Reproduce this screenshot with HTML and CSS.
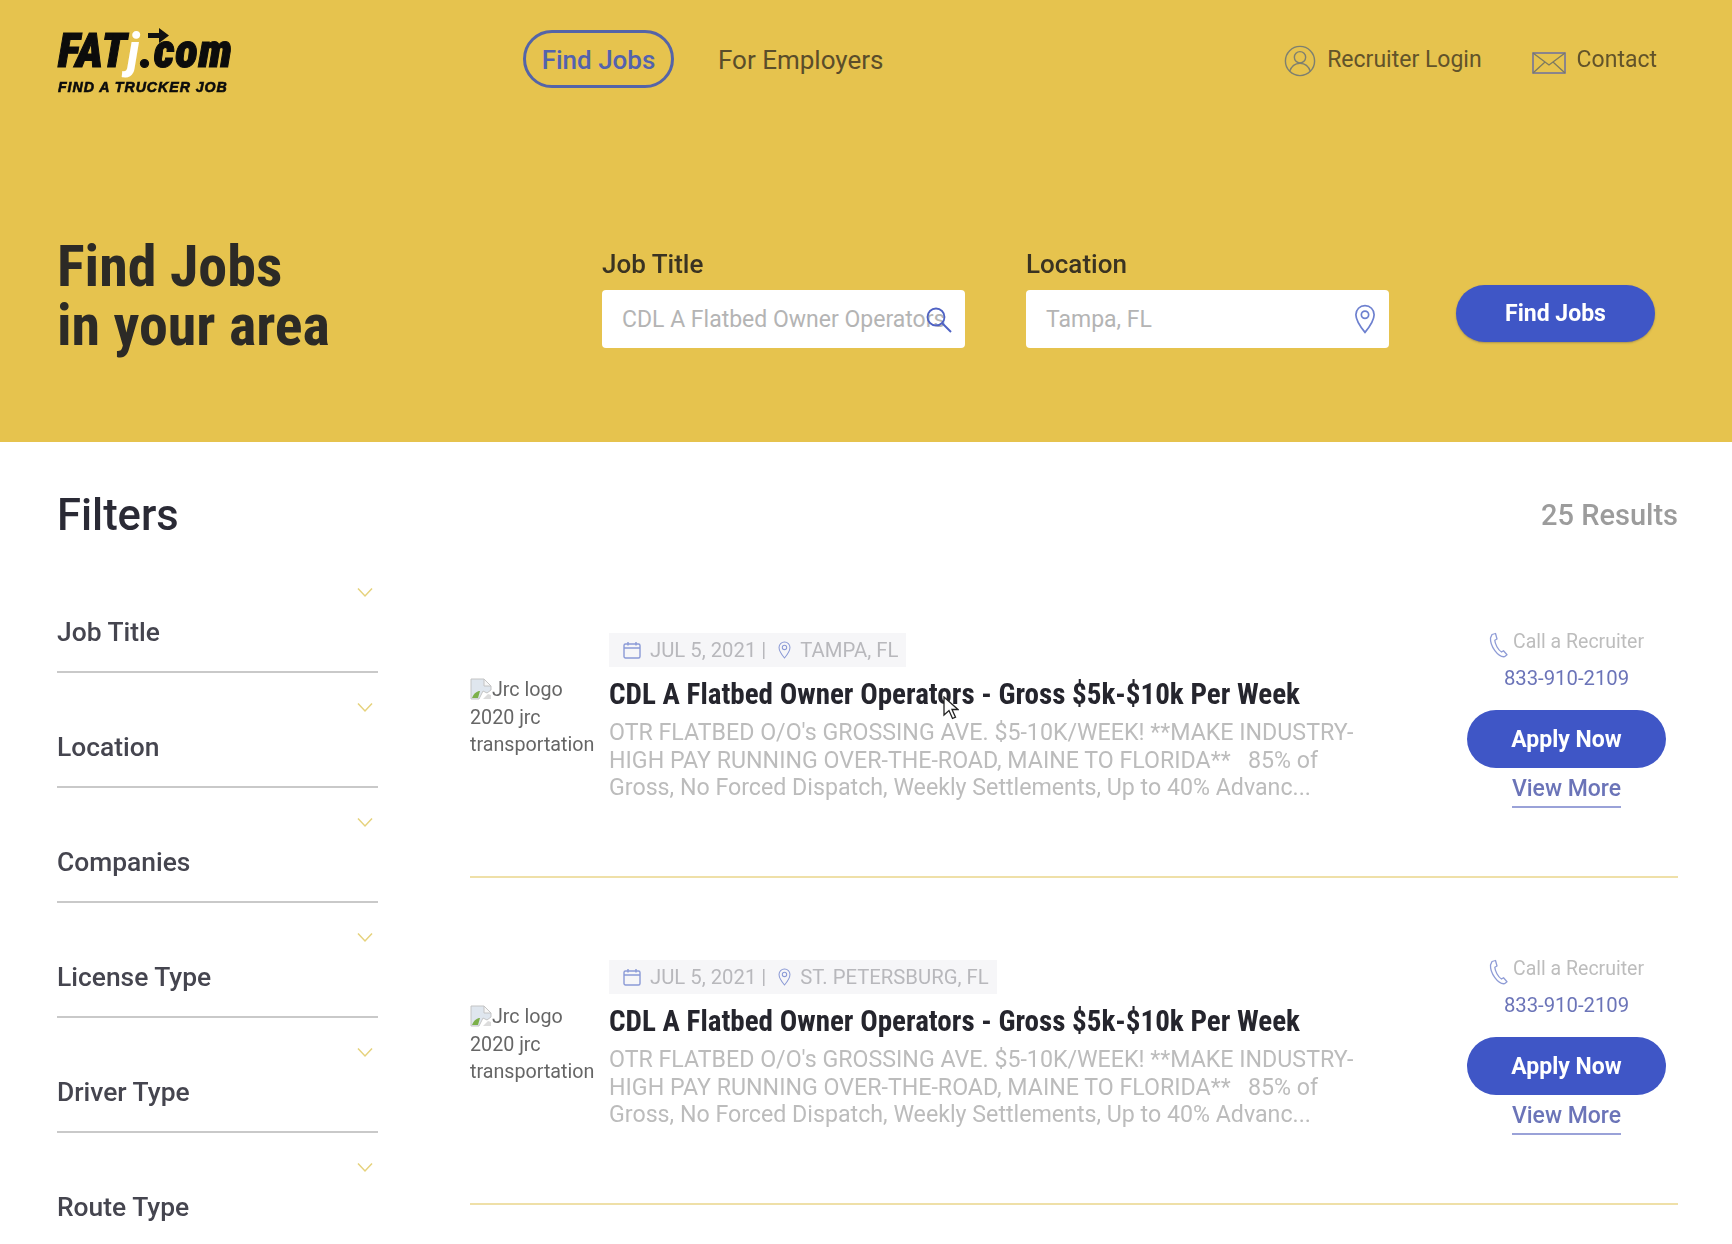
FILE: index.html
```html
<!DOCTYPE html>
<html lang="en">
<head>
<meta charset="utf-8">
<title>FATj.com - Find Jobs</title>
<link rel="stylesheet" href="styles.css">
</head>
<body>
<svg class="defs" width="0" height="0" aria-hidden="true">
  <defs>
    <symbol id="pin" viewBox="0 0 20 28"><path d="M10 1.500C5.200 1.500 1.500 5.200 1.500 10c0 6 8.500 16.500 8.500 16.500S18.500 16 18.500 10c0-4.800-3.700-8.500-8.500-8.500z" fill="none" stroke="currentColor" stroke-width="1.600"/><circle cx="10" cy="10" r="3.400" fill="none" stroke="currentColor" stroke-width="1.600"/></symbol>
    <symbol id="cal" viewBox="0 0 18 18"><rect x="1" y="3" width="16" height="14" rx="1.500" fill="none" stroke="currentColor" stroke-width="1.400"/><path d="M1 7h16M5 1v3.500M13 1v3.500" fill="none" stroke="currentColor" stroke-width="1.400"/></symbol>
    <symbol id="phone" viewBox="0 0 20 26"><path d="M3 2.500 6.500 1.500 8 7 5.800 8.300C6 12 9 18 12.500 20l2-1.300 3.500 4-2.500 2C9 25.500 1 14 1.500 6z" fill="none" stroke="currentColor" stroke-width="1.300" stroke-linejoin="round"/></symbol>
    <symbol id="chev" viewBox="0 0 16 10"><path d="M1 1l7 7.500L15 1" fill="none" stroke="currentColor" stroke-width="1.500"/></symbol>
    <symbol id="broken" viewBox="0 0 22 22"><path d="M1 1h13l7 7v4l-4 3-4-2-4 8H1z" fill="#dfe6ee" stroke="#c4c4c4"/><path d="M14 1v7h7z" fill="#f7f7f7" stroke="#c4c4c4"/><path d="M2 20c2-5 5-7 8-7l-2 7z" fill="#7cb04a"/><path d="M13 21l5-5 3 1v4z" fill="#dcdcdc"/></symbol>
  </defs>
</svg>

<header class="hero">
  <div class="topbar">
    <a class="logo">
      <span class="logo-main">FAT<span class="logo-j">j</span>.com</span>
      <svg class="logo-arrow" viewBox="0 0 21 15"><path d="M0 5h11V0l10 7.500L11 15v-5H0z" fill="#111"/></svg>
      <span class="logo-sub">FIND A TRUCKER JOB</span>
    </a>
    <nav class="nav">
      <a class="nav-pill">Find Jobs</a>
      <a class="nav-link">For Employers</a>
    </nav>
    <div class="account">
      <a class="acct-link">
        <svg class="acct-icon" viewBox="0 0 34 34"><circle cx="17" cy="17" r="15.500" fill="none" stroke="#7d7f70" stroke-width="1.500"/><circle cx="17" cy="13" r="6" fill="none" stroke="#7d7f70" stroke-width="1.500"/><path d="M6 28c2-6 6-8.500 11-8.500S26 22 28 28" fill="none" stroke="#7d7f70" stroke-width="1.500"/></svg>
        <span>Recruiter Login</span>
      </a>
      <a class="acct-link">
        <svg class="acct-icon mail" viewBox="0 0 34 22"><rect x="1" y="1" width="32" height="20" fill="none" stroke="#6c70a0" stroke-width="1.500"/><path d="M1 1l16 12L33 1M1 21l12-11M33 21 21 10" fill="none" stroke="#7d7a60" stroke-width="1.300"/></svg>
        <span>Contact</span>
      </a>
    </div>
  </div>
  <div class="search-row">
    <h1 class="hero-title">Find Jobs<br>in your area</h1>
    <div class="field">
      <label class="field-label">Job Title</label>
      <div class="field-box">
        <span class="field-text">CDL A Flatbed Owner Operators</span>
        <svg class="field-icon" viewBox="0 0 28 28"><circle cx="11" cy="11" r="8.500" fill="none" stroke="#4f62c4" stroke-width="1.800"/><path d="M17 17l9 9" stroke="#4f62c4" stroke-width="2"/></svg>
      </div>
    </div>
    <div class="field">
      <label class="field-label">Location</label>
      <div class="field-box">
        <span class="field-text">Tampa, FL</span>
        <svg class="field-icon pin"><use href="#pin"/></svg>
      </div>
    </div>
    <a class="btn btn-search">Find Jobs</a>
  </div>
</header>

<main class="content">
  <div class="content-head">
    <h2 class="filters-title">Filters</h2>
    <span class="results">25 Results</span>
  </div>
  <div class="columns">
    <aside class="sidebar">
      <div class="filter"><svg class="chev"><use href="#chev"/></svg><span>Job Title</span></div>
      <div class="filter"><svg class="chev"><use href="#chev"/></svg><span>Location</span></div>
      <div class="filter"><svg class="chev"><use href="#chev"/></svg><span>Companies</span></div>
      <div class="filter"><svg class="chev"><use href="#chev"/></svg><span>License Type</span></div>
      <div class="filter"><svg class="chev"><use href="#chev"/></svg><span>Driver Type</span></div>
      <div class="filter"><svg class="chev"><use href="#chev"/></svg><span>Route Type</span></div>
    </aside>
    <section class="jobs">
      <article class="job">
        <div class="job-logo"><svg class="broken"><use href="#broken"/></svg>Jrc logo 2020 jrc transportation</div>
        <div class="job-body">
          <div class="tag"><svg class="tag-cal"><use href="#cal"/></svg><span>JUL 5, 2021 |</span><svg class="tag-pin"><use href="#pin"/></svg><span>TAMPA, FL</span></div>
          <h3 class="job-title">CDL A Flatbed Owner Operators - Gross $5k-$10k Per Week</h3>
          <p class="job-desc">OTR FLATBED O/O's GROSSING AVE. $5-10K/WEEK! **MAKE INDUSTRY-<br>HIGH PAY RUNNING OVER-THE-ROAD, MAINE TO FLORIDA**&nbsp;&nbsp; 85% of<br>Gross, No Forced Dispatch, Weekly Settlements, Up to 40% Advanc...</p>
        </div>
        <div class="job-actions">
          <div class="call"><svg class="call-icon"><use href="#phone"/></svg><span>Call a Recruiter</span></div>
          <a class="phone-num">833-910-2109</a>
          <a class="btn btn-apply">Apply Now</a>
          <a class="view-more">View More</a>
        </div>
      </article>
      <article class="job">
        <div class="job-logo"><svg class="broken"><use href="#broken"/></svg>Jrc logo 2020 jrc transportation</div>
        <div class="job-body">
          <div class="tag"><svg class="tag-cal"><use href="#cal"/></svg><span>JUL 5, 2021 |</span><svg class="tag-pin"><use href="#pin"/></svg><span>ST. PETERSBURG, FL</span></div>
          <h3 class="job-title">CDL A Flatbed Owner Operators - Gross $5k-$10k Per Week</h3>
          <p class="job-desc">OTR FLATBED O/O's GROSSING AVE. $5-10K/WEEK! **MAKE INDUSTRY-<br>HIGH PAY RUNNING OVER-THE-ROAD, MAINE TO FLORIDA**&nbsp;&nbsp; 85% of<br>Gross, No Forced Dispatch, Weekly Settlements, Up to 40% Advanc...</p>
        </div>
        <div class="job-actions">
          <div class="call"><svg class="call-icon"><use href="#phone"/></svg><span>Call a Recruiter</span></div>
          <a class="phone-num">833-910-2109</a>
          <a class="btn btn-apply">Apply Now</a>
          <a class="view-more">View More</a>
        </div>
      </article>
    </section>
  </div>
</main>
<svg class="cursor" viewBox="0 0 16 24"><path d="M1 1v18l5-4.500 3.500 8 3-1.300-3.500-7.700H15z" fill="#fff" stroke="#222" stroke-width="1.300"/></svg>
</body>
</html>
```

FILE: styles.css
```css
* { box-sizing: border-box; }
html, body { margin: 0; padding: 0; }
body {
  position: relative;
  width: 1732px;
  height: 1244px;
  overflow: hidden;
  background: #fff;
  font-family: Roboto, "Liberation Sans", sans-serif;
  color: #2b2b33;
  filter: blur(.45px);
}
.defs { position: absolute; }
a { color: inherit; text-decoration: none; }

.hero {
  height: 442px;
  background: #e6c34e;
  padding: 30px 0 0 57px;
}
.topbar { display: flex; align-items: center; height: 58px; }
.logo {
  position: relative;
  display: block;
  width: 175px;
  height: 66px;
  margin-right: 291px;
  color: #0c0c0c;
  font-style: italic;
}
.logo-main {
  display: block;
  padding-left: 1px;
  font-family: "Roboto Condensed", "Liberation Sans Narrow", sans-serif;
  font-weight: 900;
  font-size: 47px;
  line-height: 50px;
  letter-spacing: .6px;
  white-space: nowrap;
  -webkit-text-stroke: 1px #0c0c0c;
}
.logo-j { color: #fff; -webkit-text-stroke: 0; }
.logo-arrow { position: absolute; left: 91px; top: 2px; width: 21px; height: 15px; }
.logo-sub {
  display: block;
  margin-top: 3px;
  padding-left: 1px;
  font-family: "Liberation Sans", sans-serif;
  font-weight: 700;
  font-size: 14.200px;
  line-height: 16px;
  letter-spacing: .95px;
  -webkit-text-stroke: .6px #0c0c0c;
  white-space: nowrap;
}
.nav { display: flex; align-items: center; gap: 44px; }
.nav-pill {
  display: flex;
  align-items: center;
  justify-content: center;
  width: 151px;
  height: 58px;
  padding-top: 2px;
  border: 3px solid #5464a8;
  border-radius: 29px;
  color: #5362ae;
  font-size: 26px;
  font-weight: 500;
}
.nav-link { margin-top: 2px; font-size: 26px; color: #5a4d2a; }
.account { display: flex; align-items: center; margin-left: auto; margin-right: 75px; gap: 50px; }
.acct-link { display: flex; align-items: center; gap: 11px; font-size: 23px; color: #62532a; }
.acct-icon { width: 32px; height: 32px; margin-top: 4px; }
.acct-icon.mail { width: 34px; height: 22px; margin-top: 8px; }

.search-row { display: flex; align-items: flex-start; margin-top: 149px; }
.hero-title {
  width: 545px;
  margin: 0;
  font-size: 58px;
  line-height: 59px;
  font-weight: 700;
  color: #2c2a26;
  white-space: nowrap;
  font-family: "Roboto Condensed", "Liberation Sans Narrow", Roboto, sans-serif;
}
.field { width: 363px; margin-right: 61px; padding-top: 12px; }
.field-label { display: block; font-size: 26px; line-height: 30px; font-weight: 500; color: #3a3322; margin-bottom: 11px; }
.field-box {
  display: flex;
  align-items: center;
  position: relative;
  height: 58px;
  padding-left: 20px;
  background: #fff;
  border-radius: 4px;
}
.field-text { font-size: 23px; color: #b4b4b4; white-space: nowrap; }
.field-icon { position: absolute; right: 12px; top: 16px; width: 28px; height: 28px; }
.field-icon.pin { width: 22px; height: 30px; top: 14px; right: 13px; color: #6d80cf; }
.btn {
  display: flex;
  align-items: center;
  justify-content: center;
  background: #3f56c6;
  color: #fff;
  font-weight: 700;
}
.btn-search { width: 199px; height: 57px; margin: 48px 0 0 6px; border-radius: 29px; font-size: 23px; box-shadow: 0 1px 2px rgba(60,60,80,.35); }

.content { padding: 0 54px 0 57px; }
.content-head { display: flex; align-items: center; justify-content: space-between; height: 109px; padding-top: 51px; padding-bottom: 12px; }
.filters-title { margin: 0; font-size: 43.500px; line-height: 46px; font-weight: 500; color: #2a2a35; }
.results { margin-top: -2px; font-size: 29px; font-weight: 500; color: #9c9c9c; }
.columns { display: flex; gap: 92px; }
.sidebar { width: 321px; flex: none; padding-top: 7px; }
.filter {
  position: relative;
  display: flex;
  align-items: center;
  height: 115px;
  padding-top: 35px;
  border-bottom: 2px solid #c9c9c9;
  font-size: 26.400px;
  font-weight: 500;
  color: #45454f;
}
.chev { position: absolute; right: 5px; top: 29px; width: 16px; height: 11px; color: #e6d27c; }

.jobs { flex: 1; min-width: 0; }
.job { display: flex; align-items: flex-start; height: 327px; padding-top: 77px; border-bottom: 2px solid #efe0a8; }
.job-logo { position: relative; width: 139px; flex: none; margin-top: 48px; padding-right: 10px; font-size: 19.700px; line-height: 27.600px; color: #666; text-indent: 22px; }
.broken { position: absolute; left: 0; top: 2px; width: 22px; height: 22px; }
.job-body { flex: 1; min-width: 0; margin-top: 5px; }
.tag { display: inline-flex; align-items: center; height: 34px; padding: 0 8px 0 14px; background: #f6f6f8; font-size: 20.300px; color: #b8b8bc; }
.tag-cal { width: 18px; height: 18px; margin-right: 9px; color: #8b9ad6; }
.tag-pin { width: 13px; height: 18px; margin: 0 9px 0 12px; color: #8b9ad6; }
.job-title { margin: 9px 0 0; font-size: 29.050px; line-height: 36px; font-weight: 700; color: #25252d; white-space: nowrap; font-family: "Roboto Condensed", "Liberation Sans Narrow", Roboto, sans-serif; }
.job-desc { margin: 7px 0 0; font-size: 23.200px; line-height: 27.600px; color: #bcbcbc; white-space: nowrap; }
.job-actions { display: flex; flex-direction: column; align-items: center; width: 199px; flex: none; margin-right: 12px; }
.call { display: flex; align-items: center; gap: 4px; height: 26px; font-size: 19.500px; color: #bdbdbd; }
.call-icon { width: 20px; height: 26px; margin-top: 8px; color: #8f9cd6; }
.phone-num { margin-top: 10px; font-size: 20.300px; line-height: 28px; color: #6b74b8; }
.btn-apply { width: 199px; height: 58px; margin-top: 18px; border-radius: 29px; font-size: 23px; }
.view-more { margin-top: 6px; padding-bottom: 2px; font-size: 23px; line-height: 30px; font-weight: 500; color: #6b74b8; border-bottom: 2px solid #9aa2d8; }

.cursor { position: absolute; left: 943px; top: 696px; width: 16px; height: 24px; }
```
